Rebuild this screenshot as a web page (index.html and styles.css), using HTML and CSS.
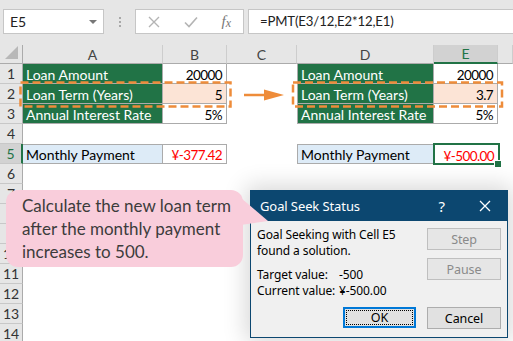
FILE: index.html
```html
<!DOCTYPE html>
<html>
<head>
<meta charset="utf-8">
<link rel="stylesheet" href="styles.css">
</head>
<body>
<div class="app">
  <div class="toolbar">
    <div class="namebox"><span>E5</span><span class="caret"></span></div>
    <div class="grip"><i></i><i></i><i></i></div>
    <div class="fxbox">
      <svg class="ico" width="12" height="12" viewBox="0 0 12 12"><path d="M1 1L11 11M11 1L1 11" stroke="#b4b4b4" stroke-width="1.4" fill="none"/></svg>
      <svg class="ico" width="14" height="12" viewBox="0 0 14 12"><path d="M1 6.5L5 10.5L13 1.5" stroke="#b4b4b4" stroke-width="1.6" fill="none"/></svg>
      <span class="fx">f<sub>x</sub></span>
    </div>
    <div class="formula">=PMT(E3/12,E2*12,E1)</div>
  </div>

  <div class="sheet">
    <div class="ch corner"><svg width="14" height="14" viewBox="0 0 14 14"><path d="M13 0V13H0Z" fill="#b8b8b8"/></svg></div>
    <div class="ch">A</div><div class="ch">B</div><div class="ch">C</div><div class="ch">D</div><div class="ch csel">E</div><div class="ch"></div>

    <div class="rh">1</div>
    <div class="c g bd">Loan Amount</div><div class="c num bd">20000</div><div class="c"></div>
    <div class="c g bd bl">Loan Amount</div><div class="c num bd">20000</div><div class="c"></div>

    <div class="rh">2</div>
    <div class="c g bd">Loan Term (Years)</div><div class="c num p bd">5</div><div class="c"></div>
    <div class="c g bd bl">Loan Term (Years)</div><div class="c num p bd">3.7</div><div class="c"></div>

    <div class="rh">3</div>
    <div class="c g bd">Annual Interest Rate</div><div class="c num bd">5%</div><div class="c"></div>
    <div class="c g bd bl">Annual Interest Rate</div><div class="c num bd">5%</div><div class="c"></div>

    <div class="rh">4</div>
    <div class="c"></div><div class="c"></div><div class="c"></div><div class="c"></div><div class="c"></div><div class="c"></div>

    <div class="rh rsel">5</div>
    <div class="c lb bd bt">Monthly Payment</div><div class="c num red bd bt">¥-377.42</div><div class="c"></div>
    <div class="c lb bd bt bl">Monthly Payment</div><div class="c num red active">¥-500.00</div><div class="c"></div>

    <div class="rh">6</div><div class="c"></div><div class="c"></div><div class="c"></div><div class="c"></div><div class="c"></div><div class="c"></div>
    <div class="rh">7</div><div class="c"></div><div class="c"></div><div class="c"></div><div class="c"></div><div class="c"></div><div class="c"></div>
    <div class="rh">8</div><div class="c"></div><div class="c"></div><div class="c"></div><div class="c"></div><div class="c"></div><div class="c"></div>
    <div class="rh">9</div><div class="c"></div><div class="c"></div><div class="c"></div><div class="c"></div><div class="c"></div><div class="c"></div>
    <div class="rh">10</div><div class="c"></div><div class="c"></div><div class="c"></div><div class="c"></div><div class="c"></div><div class="c"></div>
    <div class="rh">11</div><div class="c"></div><div class="c"></div><div class="c"></div><div class="c"></div><div class="c"></div><div class="c"></div>
    <div class="rh">12</div><div class="c"></div><div class="c"></div><div class="c"></div><div class="c"></div><div class="c"></div><div class="c"></div>
    <div class="rh">13</div><div class="c"></div><div class="c"></div><div class="c"></div><div class="c"></div><div class="c"></div><div class="c"></div>
    <div class="rh">14</div><div class="c"></div><div class="c"></div><div class="c"></div><div class="c"></div><div class="c"></div><div class="c"></div>
  </div>

  <svg class="marks" width="513" height="341" viewBox="0 0 513 341">
    <rect x="20.5" y="82.5" width="210" height="24" fill="none" stroke="#ee8c3a" stroke-width="2.5" stroke-dasharray="8 4"/>
    <rect x="293" y="82.5" width="209" height="24" fill="none" stroke="#ee8c3a" stroke-width="2.5" stroke-dasharray="8 4"/>
    <path d="M244 95H266" stroke="#ee8c3a" stroke-width="2.5"/>
    <path d="M264 89.5L284 95L264 100.5Z" fill="#ee8c3a"/>
  </svg>

  <div class="dialog">
    <div class="dtitle">
      <span class="dname">Goal Seek Status</span>
      <span class="q">?</span>
      <svg class="close" width="12" height="12" viewBox="0 0 12 12"><path d="M1 1L11 11M11 1L1 11" stroke="#fff" stroke-width="1.3" fill="none"/></svg>
    </div>
    <div class="dbody">
      <div class="dtext">
        <p>Goal Seeking with Cell E5<br>found a solution.</p>
        <p><span class="lbl">Target value:</span>-500<br><span class="lbl">Current value:</span>¥-500.00</p>
      </div>
      <div class="dside">
        <div class="btn dis">Step</div>
        <div class="btn dis">Pause</div>
      </div>
      <div class="dbtns">
        <div class="btn ok"><span>OK</span></div>
        <div class="btn">Cancel</div>
      </div>
    </div>
  </div>

  <div class="callout">Calculate the new loan term<br>after the monthly payment<br>increases to 500.</div>
</div>
</body>
</html>
```

FILE: styles.css
```css
* { box-sizing: border-box; }
body { margin: 0; }
.app {
  width: 513px; height: 341px; position: relative; overflow: hidden;
  background: #fff; font-family: Lato, "Noto Sans", sans-serif;
}
.toolbar {
  height: 45px; background: #e6e6e6; display: flex; align-items: flex-start; padding-top: 9px;
}
.namebox {
  margin-left: 3px; width: 101px; height: 25px; border: 1px solid #c6c6c6; background: #fff;
  display: flex; align-items: center; justify-content: space-between; padding: 0 6px 0 6px;
  font-size: 14px; color: #222;
}
.caret { width: 0; height: 0; border-left: 4px solid transparent; border-right: 4px solid transparent; border-top: 4px solid #777; }
.grip { width: 31px; height: 25px; display: flex; flex-direction: column; align-items: center; justify-content: center; gap: 2px; }
.grip i { width: 2px; height: 2px; background: #a8a8a8; display: block; }
.fxbox {
  width: 109px; height: 25px; border: 1px solid #c6c6c6; background: #fff;
  display: flex; align-items: center; justify-content: space-around;
}
.fx { font: italic 15px "Liberation Serif", serif; color: #777; line-height: 1; }
.fx sub { font-size: 12px; vertical-align: -1px; }
.formula {
  margin-left: 4px; flex: 1; height: 25px; border: 1px solid #c6c6c6; border-right: none; background: #fff;
  padding-left: 11px; font-size: 13.2px; letter-spacing: -0.15px; line-height: 23px; color: #222;
}
.sheet {
  display: grid;
  grid-template-columns: 23px 140px 64px 70px 137px 64px 15px;
  grid-template-rows: 19px;
  grid-auto-rows: 20px;
}
.ch {
  background: #e6e6e6; border-right: 1px solid #cdcdcd; border-bottom: 1px solid #ababab;
  display: flex; align-items: center; justify-content: center; font-size: 14px; color: #444;
}
.ch.corner { align-items: flex-end; justify-content: flex-end; padding: 0 3px 3px 0; border-right: 1px solid #ababab; }
.ch.csel { background: #d2d2d2; color: #217346; border-bottom: 2px solid #217346; }
.rh {
  background: #e6e6e6; border-right: 1px solid #ababab; border-bottom: 1px solid #c8c8c8;
  display: flex; align-items: center; justify-content: center; font-size: 14px; color: #333;
}
.rh.rsel { background: #d2d2d2; color: #217346; border-right: 2px solid #217346; }
.c {
  display: flex; align-items: flex-end; padding: 0 3px; white-space: nowrap;
  font-size: 14px; line-height: 16px; color: #000; overflow: visible;
}
.g { background: #217346; color: #fff; }
.p { background: #fce4d6; }
.lb { background: #ddebf7; }
.num { justify-content: flex-end; padding-right: 4px; font-size: 13.5px; letter-spacing: -0.6px; }
.red { color: #ff0000; }
.bd { border-right: 1px solid #ababab; border-bottom: 1px solid #ababab; }
.bl { border-left: 1px solid #ababab; }
.bt { border-top: 1px solid #ababab; }
.active { position: relative; }
.active::before {
  content: ""; position: absolute; left: -1px; top: -1px; right: -2px; bottom: -1px;
  border: 2px solid #217346;
}
.active::after {
  content: ""; position: absolute; right: -4px; bottom: -4px; width: 6px; height: 6px;
  background: #217346; border: 1px solid #fff;
}
.marks { position: absolute; left: 0; top: 0; pointer-events: none; }

.dialog {
  position: absolute; left: 250px; top: 190px; width: 258px; height: 148px;
  border: 1px solid #0c4770; background: #f0f0f0;
  box-shadow: 0 0 22px 4px rgba(0,0,0,.16);
  font: 12px "Noto Sans", sans-serif; letter-spacing: -0.1px; color: #000;
  display: flex; flex-direction: column;
}
.dtitle {
  height: 30px; background: #0c4770; color: #fff; display: flex; align-items: center; padding-left: 9px;
  font-size: 13px;
}
.dname { flex: 1; }
.q { font-size: 15px; margin-right: 34px; }
.close { margin-right: 16px; }
.dbody {
  flex: 1; display: grid; grid-template-columns: 1fr 74px; grid-template-rows: 1fr auto;
  padding: 6px 6px 8px 6px;
}
.dtext p { margin: 0 0 8px; line-height: 16px; }
.lbl { display: inline-block; width: 82px; }
.dside { display: flex; flex-direction: column; gap: 8px; padding-top: 1px; }
.dbtns { grid-column: 1 / 3; display: flex; justify-content: flex-end; gap: 11px; }
.btn {
  width: 74px; height: 22px; border: 1px solid #adadad; background: #e1e1e1;
  display: flex; align-items: center; justify-content: center; font-size: 12.5px;
}
.btn.dis { color: #8a8a8a; background: #e6e6e6; border-color: #bfbfbf; }
.btn.ok { width: 73px; height: 21px; border: 2px solid #0078d7; padding: 1px; }
.btn.ok span { flex: 1; align-self: stretch; display: flex; align-items: center; justify-content: center; border: 1px dotted #000; }

.callout {
  position: absolute; left: 6px; top: 190px; width: 237px; height: 77px;
  background: #f9cddb; border-radius: 12px;
  padding: 4px 0 0 16px; font-size: 17px; line-height: 23px; color: #3c3c3c;
}
.callout::after {
  content: ""; position: absolute; left: 228px; top: 2px; width: 34px; height: 34px;
  background: #f9cddb; clip-path: polygon(0 0, 100% 85%, 0 100%);
}
```
